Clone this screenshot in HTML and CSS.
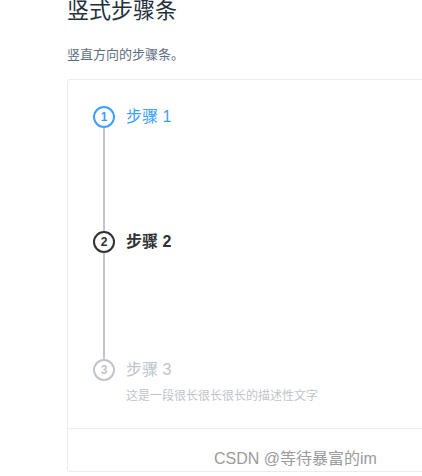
FILE: index.html
```html
<!DOCTYPE html>
<html lang="zh">
<head>
<meta charset="utf-8">
<link rel="stylesheet" href="styles.css">
</head>
<body>
<div class="page">
  <h3 class="title">竖式步骤条</h3>
  <p class="desc">竖直方向的步骤条。</p>
  <div class="demo">
    <div class="source">
      <div class="steps">
        <div class="step done s1">
          <div class="head"><span class="icon">1</span><span class="line"></span></div>
          <div class="main"><div class="step-title">步骤 1</div></div>
        </div>
        <div class="step active s2">
          <div class="head"><span class="icon">2</span><span class="line"></span></div>
          <div class="main"><div class="step-title">步骤 2</div></div>
        </div>
        <div class="step wait last">
          <div class="head"><span class="icon">3</span></div>
          <div class="main"><div class="step-title">步骤 3</div><div class="step-desc">这是一段很长很长很长的描述性文字</div></div>
        </div>
      </div>
    </div>
    <div class="control"></div>
  </div>
  <div class="watermark">CSDN @等待暴富的im</div>
</div>
</body>
</html>
```
FILE: styles.css
```css
html, body { margin: 0; padding: 0; background: #fff; overflow: hidden; }
body { font-family: "Liberation Sans", "Noto Sans CJK SC", sans-serif; }
.page { position: relative; padding-left: 67px; width: 560px; height: 476px; }
.title { margin: 0; font-size: 22px; line-height: 24px; font-weight: 400; color: #1f2f3d; margin-top: -1px; }
.desc { margin: 23px 0 0; font-size: 13px; line-height: 18px; color: #5e6d82; }
.demo { margin-top: 15px; border: 1px solid #ebebeb; border-radius: 3px; width: 520px; }
.source { padding: 26px 24px 0; height: 349px; box-sizing: border-box; border-bottom: 1px solid #eaeefb; }
.steps { display: flex; flex-direction: column; }
.step { display: flex; }
.s1 { height: 125px; }
.s2 { height: 128px; }
.head { width: 24px; display: flex; flex-direction: column; align-items: center; flex-shrink: 0; }
.icon { width: 18px; height: 18px; border: 2px solid currentColor; border-radius: 50%; display: flex; align-items: center; justify-content: center; font-size: 12px; font-weight: 700; flex-shrink: 0; }
.line { width: 2px; flex: 1; background: #c0c4cc; }
.main { padding-left: 10px; }
.step-title { font-size: 16px; line-height: 22px; }
.step-desc { font-size: 12px; line-height: 20px; margin-top: 5px; color: #c0c4cc; }
.done { color: #409eff; }
.active { color: #303133; }
.active .step-title { font-weight: 700; }
.wait { color: #c0c4cc; }
.control { height: 42px; }
.watermark { position: absolute; left: 214px; top: 446px; font-size: 16px; color: #8a8a8a; opacity: 0.85; }
```
